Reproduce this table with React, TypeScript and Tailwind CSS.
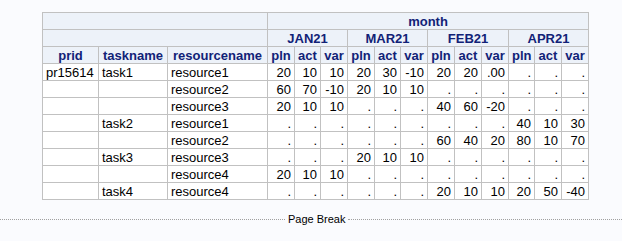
const months = ["JAN21", "MAR21", "FEB21", "APR21"];
const widths = [27, 26, 27, 27, 26, 27, 27, 27, 27, 26, 27, 27];

const rows: { prid: string; task: string; res: string; vals: string[] }[] = [
  { prid: "pr15614", task: "task1", res: "resource1", vals: ["20", "10", "10", "20", "30", "-10", "20", "20", ".00", ".", ".", "."] },
  { prid: "", task: "", res: "resource2", vals: ["60", "70", "-10", "20", "10", "10", ".", ".", ".", ".", ".", "."] },
  { prid: "", task: "", res: "resource3", vals: ["20", "10", "10", ".", ".", ".", "40", "60", "-20", ".", ".", "."] },
  { prid: "", task: "task2", res: "resource1", vals: [".", ".", ".", ".", ".", ".", ".", ".", ".", "40", "10", "30"] },
  { prid: "", task: "", res: "resource2", vals: [".", ".", ".", ".", ".", ".", "60", "40", "20", "80", "10", "70"] },
  { prid: "", task: "task3", res: "resource3", vals: [".", ".", ".", "20", "10", "10", ".", ".", ".", ".", ".", "."] },
  { prid: "", task: "", res: "resource4", vals: ["20", "10", "10", ".", ".", ".", ".", ".", ".", ".", ".", "."] },
  { prid: "", task: "task4", res: "resource4", vals: [".", ".", ".", ".", ".", ".", "20", "10", "10", "20", "50", "-40"] },
];

const head = "border border-[#c1c1c1] bg-[#edf2f9] text-[#112277] font-bold text-center px-[3px] h-[17px] leading-[15px] p-0";
const cell = "border border-[#c1c1c1] bg-white text-black px-[3px] h-[17px] leading-[15px] p-0";

export default function App() {
  return (
    <div className="min-h-[241px] bg-[#fafbfe] pt-[12px] font-['Liberation_Sans',Arial,sans-serif] text-[13px]">
      <table className="ml-[42px] table-fixed border-collapse w-[547px]">
        <colgroup>
          <col className="w-[56px]" />
          <col className="w-[69px]" />
          <col className="w-[100px]" />
          {widths.map((w, i) => (
            <col key={i} style={{ width: w }} />
          ))}
        </colgroup>
        <thead>
          <tr>
            <th colSpan={3} className={head}></th>
            <th colSpan={12} className={head}>month</th>
          </tr>
          <tr>
            <th colSpan={3} className={head}></th>
            {months.map((m) => (
              <th key={m} colSpan={3} className={head}>{m}</th>
            ))}
          </tr>
          <tr>
            <th className={head}>prid</th>
            <th className={head}>taskname</th>
            <th className={head}>resourcename</th>
            {months.map((m) =>
              ["pln", "act", "var"].map((s) => (
                <th key={m + s} className={`${head} px-0`}>{s}</th>
              ))
            )}
          </tr>
        </thead>
        <tbody>
          {rows.map((r, i) => (
            <tr key={i}>
              <td className={`${cell} text-left`}>{r.prid}</td>
              <td className={`${cell} text-left`}>{r.task}</td>
              <td className={`${cell} text-left`}>{r.res}</td>
              {r.vals.map((v, j) => (
                <td key={j} className={`${cell} text-right`}>{v}</td>
              ))}
            </tr>
          ))}
        </tbody>
      </table>

      <div className="mt-[13px] flex items-center h-[13px] text-[11px] text-black">
        <div className="w-[285px] border-t border-dotted border-[#a0a0a0]"></div>
        <span className="px-[3px] leading-[13px]">Page Break</span>
        <div className="flex-1 border-t border-dotted border-[#a0a0a0]"></div>
      </div>
    </div>
  );
}
